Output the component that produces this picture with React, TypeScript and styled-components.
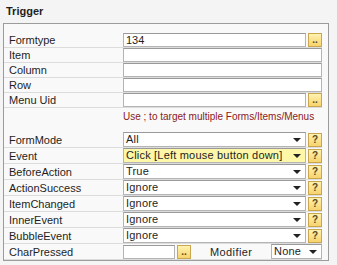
import React from 'react';
import styled, { createGlobalStyle } from 'styled-components';

const GlobalStyle = createGlobalStyle`
  html, body {
    margin: 0;
    padding: 0;
    background: #f4f4f4;
  }
  body {
    font-family: "Liberation Sans", Arial, sans-serif;
    font-size: 11px;
    color: #1e1e1e;
  }
`;

const Page = styled.div`
  width: 337px;
  height: 265px;
  padding: 5px 8px 0 3px;
  box-sizing: border-box;
`;

const Title = styled.h3`
  margin: 0 0 6px 3px;
  font-size: 11px;
  line-height: 12px;
  font-weight: bold;
`;

const Panel = styled.div`
  border: 1px solid #9c9c9c;
  background: #f9f9f9;
  padding: 9px 6px 0 0;
  height: 238px;
  box-sizing: border-box;
`;

const Row = styled.div<{ $tall?: boolean }>`
  display: flex;
  align-items: center;
  height: ${p => (p.$tall ? 16 : 15)}px;
  box-sizing: border-box;
  border-bottom: 1px solid #dcdcdc;
`;

const HintRow = styled.div`
  display: flex;
  align-items: center;
  height: 17px;
  margin-bottom: 7px;
  padding-left: 119px;
  white-space: nowrap;
  font-size: 10px;
  color: #8b1a1a;
`;

const Label = styled.div`
  width: 119px;
  flex: none;
  padding-left: 5px;
  box-sizing: border-box;
  white-space: nowrap;
`;

const Field = styled.div`
  flex: 1;
  display: flex;
  align-items: center;
  gap: 2px;
`;

const Input = styled.div<{ $width?: number }>`
  ${p => (p.$width ? `width: ${p.$width}px; flex: none;` : 'flex: 1;')}
  height: 14px;
  box-sizing: border-box;
  border: 1px solid #b4b4b4;
  border-top-color: #9a9a9a;
  background: #fff;
  padding: 0 2px;
  line-height: 12px;
`;

const Select = styled.div<{ $width?: number; $highlight?: boolean }>`
  ${p => (p.$width ? `width: ${p.$width}px; flex: none;` : 'flex: 1;')}
  height: 15px;
  box-sizing: border-box;
  border: 1px solid #b4b4b4;
  border-top-color: #9a9a9a;
  background: ${p => (p.$highlight ? '#fff7a8' : '#fff')};
  padding: 0 3px 0 2px;
  display: flex;
  align-items: center;
  justify-content: space-between;
  line-height: 13px;
  letter-spacing: 0.2px;
  white-space: nowrap;
`;

const Arrow = styled.span`
  width: 0;
  height: 0;
  border-left: 4px solid transparent;
  border-right: 4px solid transparent;
  border-top: 4px solid #222;
  margin-right: 1px;
`;

const SmallButton = styled.div`
  width: 14px;
  height: 14px;
  flex: none;
  box-sizing: border-box;
  border: 1px solid #c9a650;
  background: linear-gradient(#fff2b0, #f7d36c);
  color: #5a4a20;
  font-size: 10px;
  line-height: 11px;
  text-align: center;
  font-weight: bold;
`;

const InlineLabel = styled.span`
  flex: 1;
  margin-left: 17px;
  letter-spacing: 0.4px;
  white-space: nowrap;
`;

const inputs: { label: string; value?: string; button?: boolean }[] = [
  { label: 'Formtype', value: '134', button: true },
  { label: 'Item' },
  { label: 'Column' },
  { label: 'Row' },
  { label: 'Menu Uid', button: true },
];

const selects: { label: string; value: string; highlight?: boolean }[] = [
  { label: 'FormMode', value: 'All' },
  { label: 'Event', value: 'Click [Left mouse button down]', highlight: true },
  { label: 'BeforeAction', value: 'True' },
  { label: 'ActionSuccess', value: 'Ignore' },
  { label: 'ItemChanged', value: 'Ignore' },
  { label: 'InnerEvent', value: 'Ignore' },
  { label: 'BubbleEvent', value: 'Ignore' },
];

export default function App() {
  return (
    <Page>
      <GlobalStyle />
      <Title>Trigger</Title>
      <Panel>
        {inputs.map(f => (
          <Row key={f.label}>
            <Label>{f.label}</Label>
            <Field>
              <Input>{f.value}</Input>
              {f.button && <SmallButton>..</SmallButton>}
            </Field>
          </Row>
        ))}
        <HintRow>Use ; to target multiple Forms/Items/Menus</HintRow>
        {selects.map(f => (
          <Row key={f.label} $tall>
            <Label>{f.label}</Label>
            <Field>
              <Select $highlight={f.highlight}>
                {f.value}
                <Arrow />
              </Select>
              <SmallButton>?</SmallButton>
            </Field>
          </Row>
        ))}
        <Row $tall>
          <Label>CharPressed</Label>
          <Field>
            <Input $width={52} />
            <SmallButton>..</SmallButton>
            <InlineLabel>Modifier</InlineLabel>
            <Select $width={51}>
              None
              <Arrow />
            </Select>
          </Field>
        </Row>
      </Panel>
    </Page>
  );
}
